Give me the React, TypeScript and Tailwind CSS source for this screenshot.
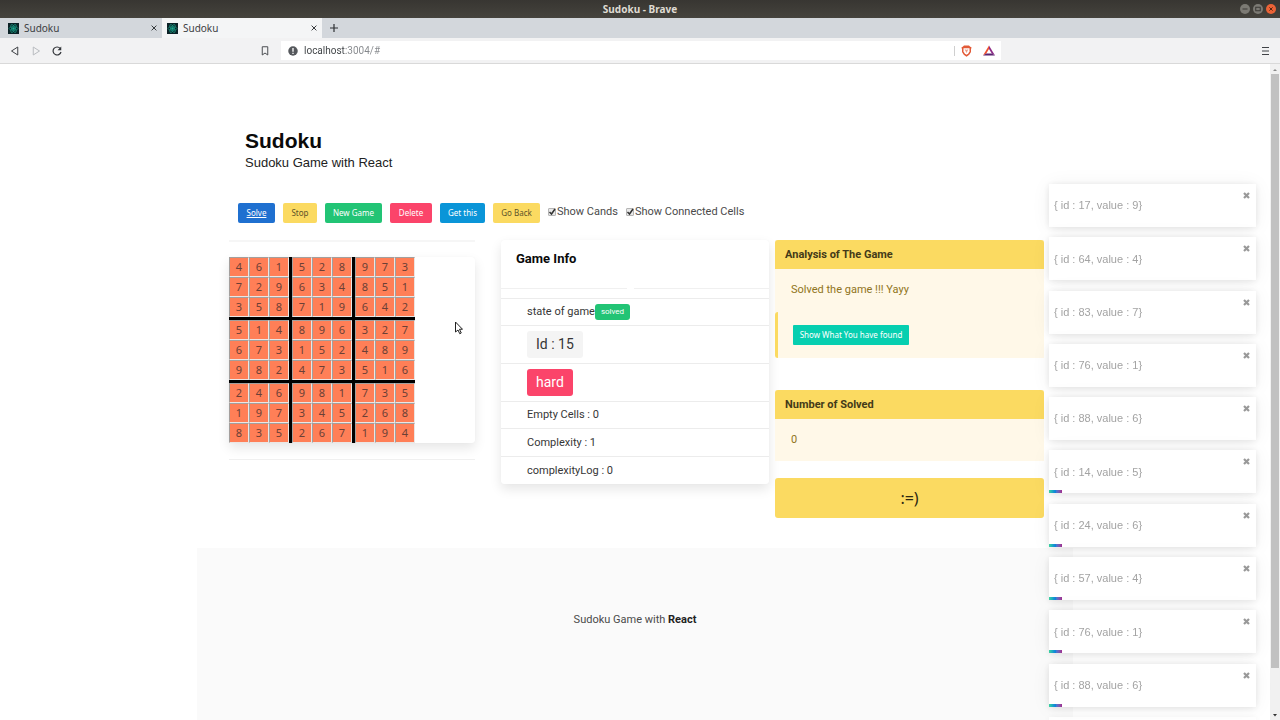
import React from "react";

const chromeFont = "font-['Noto_Sans','Open_Sans',sans-serif]";
const pageFont = "font-['Roboto','Noto_Sans',sans-serif]";
const arial = "font-['Liberation_Sans',Arial,sans-serif]";

const board = [
  "461528973",
  "729634851",
  "358719642",
  "514896327",
  "673152489",
  "982473516",
  "246981735",
  "197345268",
  "835267194",
];

const moves = [
  { id: 17, value: 9, progress: false },
  { id: 64, value: 4, progress: false },
  { id: 83, value: 7, progress: false },
  { id: 76, value: 1, progress: false },
  { id: 88, value: 6, progress: false },
  { id: 14, value: 5, progress: true },
  { id: 24, value: 6, progress: true },
  { id: 57, value: 4, progress: true },
  { id: 76, value: 1, progress: true },
  { id: 88, value: 6, progress: true },
];

const actions = [
  { label: "Solve", tone: "w-[37px] bg-[#1f70d0] text-white underline" },
  { label: "Stop", tone: "w-[34px] bg-[#fbda61] text-[#5d5229]" },
  { label: "New Game", tone: "w-[57px] bg-[#22c475] text-white" },
  { label: "Delete", tone: "w-[42px] bg-[#fb446a] text-white" },
  { label: "Get this", tone: "w-[45px] bg-[#0a95d8] text-white" },
  { label: "Go Back", tone: "w-[47px] bg-[#fbda61] text-[#5d5229]" },
];

function Favicon() {
  return (
    <svg viewBox="0 0 22 22" className="size-[11px] shrink-0" aria-hidden="true">
      <rect width="22" height="22" fill="#0c2227" />
      <g fill="none" stroke="#16917c" strokeWidth="1.5">
        <ellipse cx="11" cy="11" rx="9" ry="3.6" />
        <ellipse cx="11" cy="11" rx="9" ry="3.6" transform="rotate(60 11 11)" />
        <ellipse cx="11" cy="11" rx="9" ry="3.6" transform="rotate(120 11 11)" />
      </g>
      <circle cx="11" cy="11" r="2.4" fill="#1fae93" />
    </svg>
  );
}

function Cross() {
  return (
    <svg viewBox="0 0 10 10" className="size-[6px]" fill="none" stroke="#2e3134" strokeWidth="1.6">
      <path d="M1 1l8 8M9 1l-8 8" />
    </svg>
  );
}

function Tab({ active, wide }: { active?: boolean; wide: string }) {
  return (
    <div className={`flex items-center pr-[8px] ${wide} ${active ? "bg-[#f4f5f6] pl-[5px]" : "pl-[8px]"}`}>
      <Favicon />
      <span className="ml-[5px] flex-1 text-[10px] leading-[14px] text-[#3c4043]">Sudoku</span>
      <button type="button" aria-label="Close tab" className="-mr-[3px]">
        <Cross />
      </button>
    </div>
  );
}

function BrowserChrome() {
  return (
    <header className={`${chromeFont} shrink-0`}>
      <div className="grid h-[18px] grid-cols-[1fr_auto_1fr] items-center bg-linear-to-b from-[#383632] to-[#45433d] px-[4px]">
        <span />
        <span className="text-[10px] leading-[14px] font-bold text-[#dfdbd2]">Sudoku - Brave</span>
        <div className="flex justify-end gap-[3px]">
          <button type="button" aria-label="Minimize">
            <svg viewBox="0 0 20 20" className="size-[10px]">
              <circle cx="10" cy="10" r="10" fill="#7c7a74" />
              <path d="M5 10h10" stroke="#3a3935" strokeWidth="2" />
            </svg>
          </button>
          <button type="button" aria-label="Maximize">
            <svg viewBox="0 0 20 20" className="size-[10px]">
              <circle cx="10" cy="10" r="10" fill="#7c7a74" />
              <rect x="5.5" y="6.5" width="9" height="7" fill="none" stroke="#3a3935" strokeWidth="2" />
            </svg>
          </button>
          <button type="button" aria-label="Close">
            <svg viewBox="0 0 20 20" className="size-[10px]">
              <circle cx="10" cy="10" r="10" fill="#ec6337" />
              <path d="M6.8 6.8l6.4 6.4M13.2 6.8l-6.4 6.4" stroke="#5a2410" strokeWidth="2" />
            </svg>
          </button>
        </div>
      </div>

      <div className="flex h-[20px] bg-[#d3d7dc]">
        <Tab wide="w-[162px]" />
        <Tab wide="w-[160px]" active />
        <button type="button" aria-label="New tab" className="ml-[8px]">
          <svg viewBox="0 0 16 16" className="size-[8px]" stroke="#2e3134" strokeWidth="2.4">
            <path d="M8 0v16M0 8h16" />
          </svg>
        </button>
      </div>

      <div className="flex h-[26px] items-center border-b border-[#d9d9d9] bg-[#f2f2f3] pr-[11px] pl-[10px]">
        <div className="flex items-center gap-[11px]">
          <button type="button" aria-label="Back">
            <svg viewBox="0 0 20 20" className="size-[10px]" fill="none" stroke="#3f4246" strokeWidth="2" strokeLinejoin="round">
              <path d="M15.5 2v16L3 10z" />
            </svg>
          </button>
          <button type="button" aria-label="Forward">
            <svg viewBox="0 0 20 20" className="size-[10px]" fill="none" stroke="#b9bcc0" strokeWidth="2" strokeLinejoin="round">
              <path d="M4.5 2v16L17 10z" />
            </svg>
          </button>
          <button type="button" aria-label="Reload">
            <svg viewBox="0 0 20 20" className="size-[10px]" fill="none" stroke="#33363a" strokeWidth="2.4">
              <path d="M16.5 5A8 8 0 1 0 18 12" />
              <path d="M18.5 1v7.5h-7.5z" fill="#33363a" stroke="none" />
            </svg>
          </button>
        </div>
        <button type="button" aria-label="Bookmark" className="ml-[198px]">
          <svg viewBox="0 0 20 20" className="size-[10px]" fill="none" stroke="#4b4e52" strokeWidth="2">
            <path d="M4.5 1.5h11v16.500l-5.500-4-5.500 4z" />
          </svg>
        </button>
        <div className="ml-[11px] flex h-[19px] w-[720px] items-center bg-white pr-[6px] pl-[7px]">
          <svg viewBox="0 0 20 20" className="size-[10px] shrink-0">
            <circle cx="10" cy="10" r="9.5" fill="#55585c" />
            <path d="M10 4v7.5M10 13.5v2.5" stroke="#fff" strokeWidth="2.6" />
          </svg>
          <input
            aria-label="Address"
            defaultValue="localhost:3004/#"
            className={`${pageFont} ml-[6px] min-w-0 flex-1 bg-linear-to-r from-[#3c4043] from-[42px] to-[#85888c] to-[42px] bg-clip-text text-[10px] leading-[14px] text-transparent outline-none`}
          />
          <span className="h-[10px] w-px bg-[#cfcfcf]" />
          <button type="button" aria-label="Brave Shields" className="ml-[6px]">
            <svg viewBox="0 0 22 24" className="h-[12px] w-[11px]">
              <path d="M6 1h10l2.5 2.5 2.5 1-1 4.500 0 5-3.500 5.500L11 23.500l-5.500-4L2 14V9L1 4.500l2.500-1z" fill="#e25a37" />
              <path d="M5 6.500h12v6.500l-2.500 4-3.500 2.500L7.500 17 5 13z" fill="#fff" />
              <path d="M7 8l2.500 5L11 16l1.500-3 2.500-5-3 1.500h-2z" fill="#ec9d87" />
            </svg>
          </button>
          <button type="button" aria-label="Brave Rewards" className="ml-[11px]">
            <svg viewBox="0 0 24 22" className="h-[11px] w-[12px]">
              <path d="M12 1L0 21l6.500-4L12 8z" fill="#f0502d" />
              <path d="M12 1l12 20-6.500-4L12 8z" fill="#8c2a86" />
              <path d="M0 21h24l-6.500-4h-11z" fill="#5a2470" />
            </svg>
          </button>
        </div>
        <button type="button" aria-label="Menu" className="ml-auto">
          <svg viewBox="0 0 14 16" className="h-[8px] w-[7px]" stroke="#3f4246" strokeWidth="2">
            <path d="M0 1h14M0 8h14M0 15h14" />
          </svg>
        </button>
      </div>
    </header>
  );
}

function Option({ label }: { label: string }) {
  return (
    <label className="flex h-[17px] items-center text-[11px] leading-[16px] whitespace-nowrap">
      <span className="relative mr-px size-[8px]">
        <input
          type="checkbox"
          defaultChecked
          className="peer block size-[8px] appearance-none rounded-[1px] border border-[#b5b5b5] bg-[#e9e9e9]"
        />
        <svg
          viewBox="0 0 16 16"
          className="pointer-events-none absolute inset-0 hidden size-[8px] peer-checked:block"
          fill="none"
          stroke="#333"
          strokeWidth="3"
        >
          <path d="M3 8l4 4 7-10" />
        </svg>
      </span>
      {label}
    </label>
  );
}

function Board() {
  return (
    <section className="w-[246px]">
      <hr className="border-t-2 border-[#f6f6f6]" />
      <div className="relative mt-[15px] rounded-[3px] bg-white shadow-[0_5px_12px_rgba(10,10,10,0.1),0_0_1px_rgba(10,10,10,0.06)]">
        <table className={`${chromeFont} border-separate border-spacing-0`}>
          <tbody>
            {board.map((row, r) => (
              <tr key={r}>
                {row.split("").map((digit, c) => (
                  <td
                    key={c}
                    className={`border-black p-0 ${c === 2 || c === 5 ? "border-r-[3px]" : ""} ${r === 2 || r === 5 ? "border-b-[3px]" : ""}`}
                  >
                    <div className="size-[20px] border border-t-[#a39f9d] border-r-[#ebe6e4] border-b-[#ebe6e4] border-l-[#a39f9d] bg-[#ff7f57] text-center text-[11px] leading-[18px] text-[#6b4036]">
                      {digit}
                    </div>
                  </td>
                ))}
              </tr>
            ))}
          </tbody>
        </table>
        <svg viewBox="0 0 16 26" className="absolute top-[64px] left-[226px] h-[14px] w-[8px]">
          <path d="M1 1v20l5-4 3.500 7.500 3-1.500L9 15.500h6z" fill="#fff" stroke="#222" strokeWidth="2" />
        </svg>
      </div>
      <hr className="mt-[16px] border-[#f0f0f0]" />
    </section>
  );
}

function GameInfo() {
  return (
    <section className="ml-[26px] w-[268px] rounded-[3px] bg-white text-[#363636] shadow-[0_5px_12px_rgba(10,10,10,0.1),0_0_1px_rgba(10,10,10,0.06)]">
      <h2 className="h-[48px] px-[15px] pt-[10px] text-[13px] leading-[18px] font-bold text-[#0a0a0a]">Game Info</h2>
      <div className="flex h-[10px] gap-[7px]">
        <span className="h-px w-[126px] bg-[#f0f0f0]" />
        <span className="h-px flex-1 bg-[#f0f0f0]" />
      </div>
      <ul className="text-[11px] leading-[16px]">
        <li className="flex h-[27px] items-center border-t border-[#ececec] pl-[26px]">
          state of game
          <span className="rounded-[3px] bg-[#22c475] px-[6px] text-[8px] text-white">solved</span>
        </li>
        <li className="flex h-[38px] items-center border-t border-[#ececec] pl-[26px]">
          <span className="rounded-[3px] bg-[#f4f4f4] px-[9px] text-[14px] leading-[27px]">Id : 15</span>
        </li>
        <li className="flex h-[38px] items-center border-t border-[#ececec] pl-[26px]">
          <span className="rounded-[3px] bg-[#fb446a] px-[9px] text-[14px] leading-[27px] text-white">hard</span>
        </li>
        <li className="flex h-[27px] items-center border-t border-[#ececec] pl-[26px]">Empty Cells : 0</li>
        <li className="flex h-[28px] items-center border-t border-[#ececec] pl-[26px]">Complexity : 1</li>
        <li className="flex h-[28px] items-center border-t border-[#ececec] pl-[26px]">complexityLog : 0</li>
      </ul>
    </section>
  );
}

function Analysis() {
  return (
    <section className="ml-[6px] w-[269px] text-[11px] leading-[16px]">
      <article className="bg-[#fff8e8]">
        <h2 className="rounded-t-[3px] bg-[#fbda61] px-[10px] py-[6px] leading-[17px] font-bold text-[#443a18]">
          Analysis of The Game
        </h2>
        <p className="h-[43px] px-[16px] pt-[13px] text-[#8f7420]">Solved the game !!! Yayy</p>
        <div className="h-[46px] rounded-[3px] border-l-[3px] border-[#fbda61] px-[15px] pt-[13px]">
          <button
            type="button"
            className={`${chromeFont} block h-[20px] w-[116px] rounded-[1px] bg-[#06cfb0] text-[8px] whitespace-nowrap text-white`}
          >
            Show What You have found
          </button>
        </div>
      </article>
      <article className="mt-[32px] bg-[#fff8e8]">
        <h2 className="rounded-t-[3px] bg-[#fbda61] px-[10px] py-[6px] leading-[17px] font-bold text-[#443a18]">
          Number of Solved
        </h2>
        <p className="px-[16px] py-[13px] text-[#8f7420]">0</p>
      </article>
      <button
        type="button"
        className={`${chromeFont} mt-[17px] block h-[40px] w-full rounded-[3px] bg-[#fbda61] text-[16px] text-[#2d2812]`}
      >
        :=)
      </button>
    </section>
  );
}

const toastBox = "bg-white shadow-[0_1px_7px_rgba(0,0,0,0.1),0_1px_20px_rgba(0,0,0,0.06)]";

function Toasts() {
  return (
    <div className={`${arial} fixed top-[184px] right-[24px] bottom-0 flex w-[207px] flex-col justify-between`}>
      {moves.map((move, i) => (
        <div
          key={i}
          className={`${toastBox} relative flex h-[43px] items-center pl-[5px] text-[11px] text-[#a3a3a3]`}
        >
          {`{ id : ${move.id}, value : ${move.value}}`}
          <button type="button" aria-label="Dismiss" className="absolute top-[8px] right-[6px]">
            <svg viewBox="0 0 14 14" className="size-[7px]" stroke="#999" strokeWidth="4.4">
              <path d="M2 2l10 10M12 2L2 12" />
            </svg>
          </button>
          {move.progress && (
            <span className="absolute bottom-0 left-0 h-[3px] w-[13px] bg-linear-to-r from-[#3fd39b] via-[#1580dc] via-50% to-[#a02a90]" />
          )}
        </div>
      ))}
      <div className={`${toastBox} h-[3px]`} />
    </div>
  );
}

function Scrollbar() {
  return (
    <div className="flex w-[10px] shrink-0 flex-col items-center bg-[#f1f1f1]" aria-hidden="true">
      <svg viewBox="0 0 10 10" className="h-[10px] w-[10px]" fill="#8a8a8a">
        <path d="M3 7h4L5 5z" />
      </svg>
      <span className="mb-[42px] w-[8px] flex-1 bg-[#c1c1c1]" />
      <svg viewBox="0 0 10 10" className="h-[10px] w-[10px]" fill="#333">
        <path d="M3 4h4L5 6.500z" />
      </svg>
    </div>
  );
}

export default function App() {
  return (
    <div className={`${pageFont} flex min-h-screen flex-col bg-white text-[#4a4a4a]`}>
      <BrowserChrome />
      <div className="flex flex-1">
        <main className="flex flex-1 flex-col items-center">
          <div className="flex w-[876px] max-w-full flex-1 flex-col">
            <div className={`${arial} pt-[64px] pl-[48px]`}>
              <h1 className="text-[21px] leading-[25px] font-bold text-[#0a0a0a]">Sudoku</h1>
              <p className="text-[13px] leading-[20px] text-[#222]">Sudoku Game with React</p>
            </div>

            <div className="mt-[30px] flex gap-[8px] pl-[41px]">
              {actions.map((action) => (
                <button
                  key={action.label}
                  type="button"
                  className={`${chromeFont} h-[20px] rounded-[2px] text-[8px] leading-[20px] whitespace-nowrap ${action.tone}`}
                >
                  {action.label}
                </button>
              ))}
              <Option label="Show Cands" />
              <Option label="Show Connected Cells" />
            </div>

            <div className="mt-[17px] flex items-start pl-[32px]">
              <Board />
              <GameInfo />
              <Analysis />
            </div>

            <footer className="mt-[30px] flex-1 bg-[#fafafa] pt-[64px] text-center text-[11px] leading-[16px]">
              Sudoku Game with <strong className="font-bold text-[#222]">React</strong>
            </footer>
          </div>
        </main>
        <Scrollbar />
      </div>
      <Toasts />
    </div>
  );
}
